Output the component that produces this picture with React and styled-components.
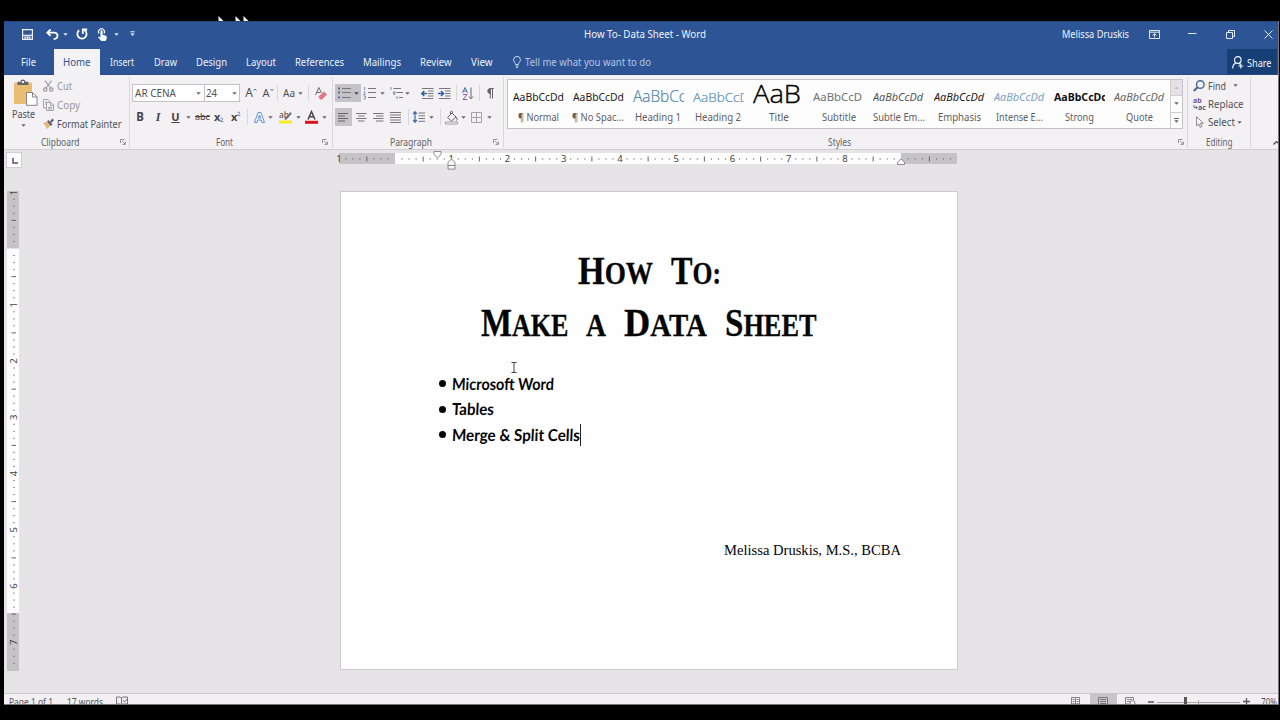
import React, { useLayoutEffect, useRef } from "react";
import styled, { createGlobalStyle, css } from "styled-components";

const Global = createGlobalStyle`
  * { box-sizing: border-box; }
  body { margin: 0; background: #000; overflow: hidden; }
  svg { display: block; overflow: visible; flex: none; }
`;

const UI = `"Noto Sans", "Open Sans", sans-serif`;

/* ---------- text fitted to a fixed advance width ---------- */
const FitBox = styled.span`
  display: block;
  flex: none;
  width: ${(p) => p.$w}px;
  height: ${(p) => p.$lh || 14}px;
  margin-left: ${(p) => p.$l || 0}px;
  white-space: nowrap;
  font: ${(p) => p.$font || `${p.$size || 11}px ${UI}`};
  line-height: ${(p) => p.$lh || 14}px;
  color: ${(p) => p.$c || "inherit"};
  ${(p) => p.$stroke && css`-webkit-text-stroke: ${p.$stroke}px currentColor;`}
`;
const FitInner = styled.span`
  display: inline-block;
  transform-origin: 0 50%;
`;
function Fit({ w, l, size, font, lh, c, stroke, slant = 0, children }) {
  const ref = useRef(null);
  useLayoutEffect(() => {
    const el = ref.current;
    el.style.transform = "none";
    const natural = el.getBoundingClientRect().width;
    if (natural) el.style.transform = `scaleX(${w / natural})${slant ? ` skewX(${-slant}deg)` : ""}`;
  }, [w, slant]);
  return (
    <FitBox $w={w} $l={l} $size={size} $font={font} $lh={lh} $c={c} $stroke={stroke}>
      <FitInner ref={ref}>{children}</FitInner>
    </FitBox>
  );
}

/* ---------- icons ---------- */
const IconBox = styled.span`
  display: block;
  flex: none;
  margin-left: ${(p) => p.$l || 0}px;
  width: ${(p) => p.$w}px;
  height: ${(p) => p.$h}px;
`;
const Icon = ({ w, h, l, c = "#666", sw = 1, children }) => (
  <IconBox $w={w} $h={h} $l={l}>
    <svg width={w} height={h} viewBox={`0 0 ${w} ${h}`} fill="none" stroke={c} strokeWidth={sw}>
      {children}
    </svg>
  </IconBox>
);
const Caret = ({ l, c = "#666" }) => (
  <Icon w={5} h={3} l={l} c="none"><path d="M0.3 0.2h4.4L2.5 2.7z" fill={c} /></Icon>
);
const Launcher = ({ l }) => (
  <Icon w={6} h={6} l={l} c="#777" sw={0.8}>
    <path d="M0.5 4V0.5H4.5M2.2 2.2L5 5M5.4 2.5V5.4H2.5" />
  </Icon>
);
const Lines = ({ rows, c = "#777" }) => (
  <>{rows.map(([x1, x2, y], i) => <path key={i} d={`M${x1} ${y}H${x2}`} stroke={c} />)}</>
);

/* ---------- frame ---------- */
const Screen = styled.div`
  width: 1280px;
  height: 720px;
  background: #000;
  overflow: hidden;
  font-family: ${UI};
`;
const TopStrip = styled.div`
  height: 21px;
  padding: 16px 0 0 218px;
  display: flex;
  overflow: hidden;
`;
const Window = styled.div`
  width: 1275px;
  height: 684px;
  margin-left: 4px;
  overflow: hidden;
  display: flex;
  flex-direction: column;
  background: #e6e4e7;
  border-right: 1px solid #77777c;
  border-bottom: 1px solid #77777c;
`;
const TitleBar = styled.div`
  height: 28px;
  flex: none;
  display: flex;
  align-items: center;
  padding-bottom: 3px;
  background: #2d5596;
  border-top: 1px solid #24477f;
  color: #eef3fb;
`;
const TabBar = styled.div`
  height: 26px;
  flex: none;
  display: flex;
  align-items: center;
  background: #2d5596;
  border-bottom: 1px solid #254b8a;
  color: #eaf0fa;
`;
const ActiveTab = styled.div`
  width: 46px;
  height: 26px;
  margin: 1px 0 0 18px;
  display: flex;
  align-items: center;
  background: #f3f2f5;
  color: #2f5696;
`;
const ShareButton = styled.div`
  width: 50px;
  height: 25px;
  margin-left: 576px;
  padding-top: 2px;
  display: flex;
  align-items: center;
  background: #163f75;
  color: #f3f6fb;
`;

/* ---------- ribbon ---------- */
const Ribbon = styled.div`
  height: 75px;
  flex: none;
  display: flex;
  background: #f3f1f4;
  border-bottom: 1px solid #d0ced1;
  color: #505054;
`;
const Group = styled.div`
  width: ${(p) => p.$w}px;
  flex: none;
  margin: 2px 0 1px;
  display: flex;
  flex-direction: column;
  border-right: 1px solid #dad8dc;
`;
const GroupBody = styled.div`
  height: 58px;
  flex: none;
  display: flex;
  flex-direction: ${(p) => (p.$col ? "column" : "row")};
`;
const GroupFooter = styled.div`
  height: 14px;
  display: flex;
  align-items: center;
  color: #626266;
`;
const Row = styled.div`
  display: flex;
  align-items: center;
  flex: none;
  height: ${(p) => p.$h}px;
  margin-top: ${(p) => p.$t || 0}px;
  color: ${(p) => p.$c || "inherit"};
`;
const PasteButton = styled.div`
  width: 35px;
  display: flex;
  flex-direction: column;
  padding: 3px 0 0 8px;
`;
const List = styled.div`
  display: flex;
  flex-direction: column;
  padding-left: ${(p) => p.$l}px;
`;
const ComboBox = styled.div`
  width: ${(p) => p.$w}px;
  height: 18px;
  flex: none;
  margin-left: ${(p) => p.$l || 0}px;
  display: flex;
  align-items: center;
  background: #fff;
  border: 1px solid #c4c2c6;
`;
const Divider = styled.span`
  width: 1px;
  height: 16px;
  flex: none;
  margin-left: ${(p) => p.$l}px;
  background: #d8d6da;
`;
const Pressed = styled.div`
  width: ${(p) => p.$w}px;
  height: 18px;
  flex: none;
  margin-left: ${(p) => p.$l}px;
  display: flex;
  align-items: center;
  background: #c5c3c7;
`;
const Gallery = styled.div`
  width: 676px;
  height: 50px;
  margin: 2px 0 0 3px;
  display: flex;
  background: #fdfdfe;
  border: 1px solid #c4c2c6;
`;
const StyleCard = styled.div`
  width: 60.15px;
  flex: none;
  display: flex;
  flex-direction: column;
  align-items: center;
`;
const Sample = styled.div`
  height: 28px;
  width: 51px;
  overflow: hidden;
  display: flex;
  align-items: flex-end;
`;
const CardLabel = styled.div`
  height: 14px;
  margin-top: 2px;
  color: #5d5d61;
`;
const GalleryScroll = styled.div`
  margin-left: auto;
  width: 12px;
  display: flex;
  flex-direction: column;
  border-left: 1px solid #d0ced2;
`;
const ScrollCell = styled.div`
  flex: 1;
  display: flex;
  align-items: center;
  justify-content: center;
  background: ${(p) => (p.$off ? "#e4e2e6" : "#fdfdfe")};
  & + & { border-top: 1px solid #d0ced2; }
`;

/* ---------- work area ---------- */
const RulerRow = styled.div`
  height: 41px;
  flex: none;
  display: flex;
  padding-top: 2px;
`;
const TabSelector = styled.div`
  width: 16px;
  height: 16px;
  margin-left: 2px;
  padding: 5px 0 0 5px;
  background: #fcfcfd;
  border: 1px solid #cfcdd0;
`;
const HRulerBox = styled.div`
  margin: 1px 0 0 317px;
`;
const Canvas = styled.div`
  flex: 1;
  display: flex;
  align-items: flex-start;
`;
const VRulerBox = styled.div`
  width: 12px;
  margin-left: 3px;
`;
const Page = styled.div`
  position: relative;
  width: 618px;
  height: 479px;
  margin: 0 0 0 321px;
  padding-top: 56px;
  background: #fefefe;
  border: 1px solid #cccacd;
  color: #050505;
`;
const Heading = styled.div`
  display: flex;
  height: ${(p) => p.$h}px;
  padding-left: ${(p) => p.$l}px;
  gap: 18px;
`;
const Small = styled.span`
  font-size: 31px;
`;
const BulletList = styled.ul`
  list-style: none;
  margin: 19px 0 0;
  padding: 0 0 0 98px;
`;
const Bullet = styled.li`
  display: flex;
  align-items: center;
  height: 25.6px;
`;
const Dot = styled.span`
  width: 7px;
  height: 7px;
  margin-right: 6px;
  border-radius: 50%;
  background: #050505;
`;
const TextCaret = styled.span`
  width: 1px;
  height: 22px;
  background: #222;
`;
const Author = styled.div`
  margin: 93px 0 0 383px;
`;
const Pointer = styled.div`
  position: absolute;
  left: 170px;
  top: 170px;
`;
const StatusBar = styled.div`
  height: 11px;
  flex: none;
  display: flex;
  overflow: hidden;
  background: #f2f0f3;
  border-top: 1px solid #c9c7ca;
  color: #58585c;
`;
const StatusItem = styled.div`
  flex: none;
  padding-top: ${(p) => p.$t || 0}px;
  margin-left: ${(p) => p.$l}px;
  height: 16px;
`;
const ViewActive = styled.div`
  width: 27px;
  height: 10px;
  margin-left: 10px;
  padding: 3px 0 0 8px;
  background: #c7c5c8;
`;

const U = 56.25;
function HRuler() {
  const marks = [];
  for (let i = -7; i <= 79; i++) {
    const x = 56 + (i * U) / 8;
    if (x > 614) break;
    if (i % 8 === 0) {
      if (i > 0 && i < 72) marks.push(<text key={i} x={x} y={9.4} textAnchor="middle" fontSize="9.5" fontFamily={UI} fill="#444">{i / 8}</text>);
    } else if (i % 4 === 0) marks.push(<path key={i} d={`M${x} 3.5v5`} stroke="#666" />);
    else marks.push(<path key={i} d={`M${x} 5.3v1.4`} stroke="#777" />);
  }
  return (
    <svg width="618" height="12">
      <rect width="618" height="11" fill="#fdfdfe" />
      <rect width="56" height="11" fill="#c5c3c5" />
      <rect x="562" width="56" height="11" fill="#c5c3c5" />
      {marks}
      <text x="0" y="9.4" textAnchor="middle" fontSize="9.5" fontFamily={UI} fill="#444">1</text>
      <g fill="#fafafa" stroke="#808084" strokeWidth="0.9">
        <path d="M95 -1.5h7v3l-3.5 3.3L95 1.5z" />
        <path d="M109 12.5V9.3L112.5 6l3.5 3.3V12.5zM109 12.5h7v3.6h-7z" />
        <path d="M558.5 11.5V9.2L562 6l3.5 3.2v2.3z" />
      </g>
    </svg>
  );
}
function VRuler() {
  const marks = [];
  for (let i = -7; i <= 59; i++) {
    const y = 57.5 + (i * U) / 8;
    if (y > 476) break;
    if (i % 8 === 0) {
      if (i) marks.push(<text key={i} transform={`translate(10 ${y}) rotate(-90)`} textAnchor="middle" fontSize="9.5" fontFamily={UI} fill="#444">{i / 8}</text>);
    } else if (i % 4 === 0) marks.push(<path key={i} d={`M4.5 ${y}h4.5`} stroke="#666" />);
    else marks.push(<path key={i} d={`M6.2 ${y}h1.5`} stroke="#777" />);
  }
  return (
    <svg width="12" height="480">
      <rect width="12" height="480" fill="#fdfdfe" />
      <rect width="12" height="57.5" fill="#c5c3c5" />
      <rect y="422" width="12" height="58" fill="#c5c3c5" />
      {marks}
      <text transform="translate(10 1.5) rotate(-90)" textAnchor="middle" fontSize="9.5" fontFamily={UI} fill="#444">1</text>
    </svg>
  );
}

const it = (s = 11) => `italic ${s}px ${UI}`;
const light = (s) => `300 ${s}px "Open Sans", ${UI}`;
const cards = [
  { s: "AaBbCcDd", w: 51, c: "#1b1b1b", n: "¶ Normal", nw: 41 },
  { s: "AaBbCcDd", w: 51, c: "#1b1b1b", n: "¶ No Spac...", nw: 52 },
  { s: "AaBbCcD", w: 64, c: "#4f86ad", n: "Heading 1", nw: 46, font: light(15.5), lh: 23, stroke: 0.2 },
  { s: "AaBbCcD", w: 56, c: "#5c8db0", n: "Heading 2", nw: 46, font: light(13), lh: 22, stroke: 0.2 },
  { s: "AaB", w: 48, c: "#000", n: "Title", nw: 20, font: light(26), lh: 30, stroke: 0.4 },
  { s: "AaBbCcD", w: 49, c: "#707074", n: "Subtitle", nw: 34 },
  { s: "AaBbCcDd", w: 50, c: "#555", n: "Subtle Em...", nw: 52, font: it() },
  { s: "AaBbCcDd", w: 50, c: "#1b1b1b", n: "Emphasis", nw: 43, font: it() },
  { s: "AaBbCcDd", w: 50, c: "#79a3c8", n: "Intense E...", nw: 47, font: it() },
  { s: "AaBbCcDd", w: 54, c: "#111", n: "Strong", nw: 29, font: `bold 11px ${UI}` },
  { s: "AaBbCcDd", w: 50, c: "#666", n: "Quote", nw: 27, font: it() },
];

const serif = (s) => `bold ${s}px "Liberation Serif", serif`;
const Word = ({ w, cap, rest }) => (
  <Fit w={w} font={serif(39)} lh={46} stroke={0.3}>{cap}<Small>{rest}</Small></Fit>
);
const Casual = ({ w, children }) => (
  <Fit w={w} font={`700 16.5px Lato, sans-serif`} lh={20} slant={3}>{children}</Fit>
);

const Glyph = styled.span`
  display: block;
  flex: none;
  width: ${(p) => p.$w}px;
  margin-left: ${(p) => p.$l}px;
  text-align: center;
  white-space: nowrap;
  font: ${(p) => p.$font};
  line-height: 16px;
  ${(p) => p.$u && css`text-decoration: ${p.$u};`}
`;

export default function App() {
  return (
    <Screen>
      <Global />
      <TopStrip>
        {[0, 12, 3].map((l, i) => (
          <Icon key={i} w={5} h={6} l={l} c="none"><path d="M0.5 0L5.5 5H0.5z" fill="#f4f4f4" /></Icon>
        ))}
      </TopStrip>
      <Window>
        <TitleBar>
          <Icon w={11} h={11} l={18} c="#eef3fb" sw={1.2}>
            <path d="M0.6 0.6h9.8v9.8H0.6z" /><path d="M1 6.3h9" /><path d="M3 10.4V8h5v2.4M5.5 8.5v2" />
          </Icon>
          <Icon w={13} h={11} l={13} c="#fff" sw={1.8}>
            <path d="M4.6 0.5L1.3 3.7l3.3 3.2M1.8 3.7h6.4c4.5 0 4.5 6-0.5 6.3" />
          </Icon>
          <Caret l={4} c="#dfe8f6" />
          <Icon w={12} h={12} l={8} c="#fff" sw={1.8}>
            <path d="M3.2 2.3A4.6 4.6 0 1 0 8.6 2.2M6.8 6V1.5h4.4" />
          </Icon>
          <Icon w={11} h={13} l={9} c="#f3f6fc" sw={1.2}>
            <path d="M2 5.5a3 3 0 1 1 5 0" /><path d="M3.4 3.5c0-1.7 2.3-1.7 2.3 0v3.3l4 1.2v3l-1.3 2H4.2L1 9.2l1-.8 1.4 1z" fill="#f3f6fc" stroke="none" />
          </Icon>
          <Caret l={6} c="#dfe8f6" />
          <Icon w={5} h={6} l={11} c="#e8eef8"><path d="M0.3 0.8h4.4" /><path d="M0.3 2.6h4.4L2.5 5z" fill="#e8eef8" stroke="none" /></Icon>
          <Fit l={449} w={122}>How To- Data Sheet - Word</Fit>
          <Fit l={356} w={67}>Melissa Druskis</Fit>
          <Icon w={11} h={9} l={20} c="#dfe8f6"><path d="M0.5 0.5h10v8h-10zM0.5 2.2h10M5.5 7.5V3.8M3.5 5.5l2-2 2 2" /></Icon>
          <Icon w={9} h={2} l={28} c="#dfe8f6"><path d="M0 0.5h8.5" /></Icon>
          <Icon w={9} h={9} l={29} c="#dfe8f6"><path d="M0.5 2.5h6v6h-6zM2.5 2.5v-2h6v6h-2" /></Icon>
          <Icon w={9} h={9} l={29} c="#dfe8f6"><path d="M0.5 0.5l8 8M8.5 0.5l-8 8" /></Icon>
        </TitleBar>
        <TabBar>
          <Fit l={17} w={15}>File</Fit>
          <ActiveTab><Fit l={9} w={27.5}>Home</Fit></ActiveTab>
          <Fit l={10} w={24}>Insert</Fit>
          <Fit l={20} w={23}>Draw</Fit>
          <Fit l={19} w={31}>Design</Fit>
          <Fit l={19} w={30}>Layout</Fit>
          <Fit l={19} w={49}>References</Fit>
          <Fit l={19} w={38}>Mailings</Fit>
          <Fit l={19} w={31.5}>Review</Fit>
          <Fit l={19} w={21.5}>View</Fit>
          <Icon w={8} h={12} l={20.5} c="#c5d3ec"><path d="M2.5 8.5C2.5 6.5 0.6 6 0.6 3.8a3.4 3.4 0 0 1 6.8 0C7.4 6 5.5 6.5 5.5 8.5zM2.5 10h3M3 11.5h2" /></Icon>
          <Fit l={4.5} w={126} c="#b4c5e4">Tell me what you want to do</Fit>
          <ShareButton>
            <Icon w={12} h={13} l={4.5} c="#eef3fb" sw={1.2}><circle cx="5.8" cy="4" r="3.3" /><path d="M0.7 12.5c0-3 1.5-4.8 3.5-5.3M6.8 7.5l1.2 0.8M8.8 7.5v5M6.3 10h5" /></Icon>
            <Fit l={3} w={24.5}>Share</Fit>
          </ShareButton>
        </TabBar>

        <Ribbon>
          <Group $w={126}>
            <GroupBody>
              <PasteButton>
                <Icon w={25} h={27} l={1} c="none">
                  <rect x="1" y="2.5" width="18" height="21.5" rx="1" fill="#e9bd72" />
                  <path d="M4.5 5V1.8h3a2.4 2.4 0 0 1 4.8 0h3V5z" fill="#64646a" /><rect x="8.8" y="1" width="2.2" height="2" fill="#f3f1f4" />
                  <path d="M13.5 12.5h6l4.5 4.5v8.3H13.5z" fill="#fff" stroke="#85858a" /><path d="M19.5 12.5V17h4.5" stroke="#85858a" />
                </Icon>
                <Fit w={23} lh={14}>Paste</Fit>
                <Row $h={9}><Caret l={9} /></Row>
              </PasteButton>
              <List $l={4}>
                <Row $h={18} $c="#99979b">
                  <Icon w={11} h={12} c="#9b999d" sw={1.2}><path d="M2 0.5l5.5 7.5M8.5 0.5L3 8" /><circle cx="2.3" cy="9.5" r="1.7" /><circle cx="8.3" cy="9.5" r="1.7" /></Icon>
                  <Fit l={3} w={15}>Cut</Fit>
                </Row>
                <Row $h={19} $c="#99979b">
                  <Icon w={11} h={12} c="#a6a4a8"><path d="M0.5 0.5h4.5l1.5 1.5v1M0.5 0.5v8.5h3M3.5 3.5h4.5l2.5 2.5v5.5h-7zM7.5 3.5v3h3M2 3h1.5M2 5h1M5 8.5h4M5 10h4" /></Icon>
                  <Fit l={3} w={23}>Copy</Fit>
                </Row>
                <Row $h={19}>
                  <Icon w={11} h={11} c="none"><path d="M0 5l4-1 3 4-3 3C3 8 1.5 7 0 5z" fill="#e5b676" /><path d="M4 3.5L5.5 2l4 4.5L7.5 8z" fill="#606066" /><path d="M7 3.2L9.5 0.5l1.5 1.7-2.7 2.7z" fill="#606066" /></Icon>
                  <Fit l={3} w={64.5}>Format Painter</Fit>
                </Row>
              </List>
            </GroupBody>
            <GroupFooter><Fit l={37} w={38.5} size={10}>Clipboard</Fit><Launcher l={40.5} /></GroupFooter>
          </Group>

          <Group $w={203}>
            <GroupBody $col>
              <Row $h={18} $t={7}>
                <ComboBox $w={73} $l={2}><Fit l={1.5} w={41}>AR CENA</Fit><Caret l={20.5} /></ComboBox>
                <ComboBox $w={36} $l={-1}><Fit l={1} w={11}>24</Fit><Caret l={15} /></ComboBox>
                <Glyph $w={8} $l={5} $font={`12px ${UI}`}>A</Glyph>
                <Icon w={4} h={10} c="#4b6fa5"><path d="M0.5 2.5L2 1l1.5 1.5" /></Icon>
                <Glyph $w={8} $l={5} $font={`11px ${UI}`}>A</Glyph>
                <Icon w={4} h={10} c="#4b6fa5"><path d="M0.5 1L2 2.5 3.5 1" /></Icon>
                <Divider $l={3} />
                <Fit l={5} w={12}>Aa</Fit><Caret l={3} />
                <Divider $l={5} />
                <Icon w={12} h={13} l={6} c="none"><path d="M0.5 8L3.8 0.5 6.5 6M1.8 5.5h3.5" stroke="#66666a" /><path d="M3.5 9.5L9 4.5l3 3-5 5H5z" fill="#e0768c" /></Icon>
              </Row>
              <Row $h={18} $t={6} $c="#444448">
                <Glyph $w={8} $l={6} $font={`bold 11.5px ${UI}`}>B</Glyph>
                <Glyph $w={8} $l={10} $font={`italic bold 12px "Liberation Serif", serif`}>I</Glyph>
                <Glyph $w={9} $l={9} $font={`bold 11px ${UI}`} $u="underline">U</Glyph>
                <Caret l={6} />
                <Glyph $w={14} $l={4} $font={`9px ${UI}`} $u="line-through">abc</Glyph>
                <Glyph $w={6} $l={5} $font={`bold 11px ${UI}`}>x</Glyph>
                <Icon w={4} h={10} c="#4b6fa5" sw={0.8}><path d="M0.5 6.5c1-1 2.5-0.5 2 0.8L0.5 9.5h3" /></Icon>
                <Glyph $w={6} $l={7} $font={`bold 11px ${UI}`}>x</Glyph>
                <Icon w={4} h={10} c="#4b6fa5" sw={0.8}><path d="M0.5 0.5c1-1 2.5-0.5 2 0.8L0.5 3.5h3" /></Icon>
                <Divider $l={6} />
                <Icon w={11} h={11} l={6} c="#5a8ac6" sw={0.9}><path d="M0.5 10.5L4 0.5h3l3.5 10H8L7.2 8H3.8L3 10.5zM4.5 6h2L5.5 3z" fill="#e9f1fb" /></Icon>
                <Caret l={3} />
                <Icon w={14} h={13} l={6} c="none">
                  <rect y="9.5" width="13" height="3" fill="#f7ef20" />
                  <text x="0" y="7" fontSize="8.5" fontFamily={UI} fill="#444">ab</text>
                  <path d="M12.8 2.5L7.5 8.5 5.5 9l.5-2L11.5 1z" fill="#6d6d72" />
                </Icon>
                <Caret l={3} />
                <Icon w={13} h={13} l={4} c="none">
                  <rect y="9.8" width="13" height="3" fill="#d8131c" />
                  <path d="M3 8.5L6.5 0.5 10 8.5M4.2 5.8h4.6" stroke="#44444a" strokeWidth="1.5" />
                </Icon>
                <Caret l={4} />
              </Row>
            </GroupBody>
            <GroupFooter><Fit l={86} w={17} size={10}>Font</Fit><Launcher l={89} /></GroupFooter>
          </Group>

          <Group $w={171}>
            <GroupBody $col>
              <Row $h={18} $t={7}>
                <Pressed $w={26} $l={2}>
                  <Icon w={14} h={12} l={2}><Lines rows={[[5, 14, 1.5], [5, 14, 5.5], [5, 14, 10.5]]} /><path d="M1 1.5h2M1 5.5h2M1 10.5h2" stroke="#4f6f9f" strokeWidth="2" /></Icon>
                  <Caret l={3} c="#444" />
                </Pressed>
                <Icon w={13} h={12} l={2}><Lines rows={[[5, 13, 1.5], [5, 13, 5.5], [5, 13, 10.5]]} /><path d="M1.5 0v3M0.5 4.8h1.5v1.3l-1.5 1.5h2M0.5 9h1.8v3h-1.8" stroke="#5d7cab" strokeWidth="0.8" /></Icon>
                <Caret l={4} />
                <Icon w={13} h={12} l={5}><Lines rows={[[3.5, 11, 1.5], [6.5, 13, 5.5], [9, 13, 10.5]]} /><path d="M1 0v3M3.5 4.8h1.5v2.5h-1.5zM7 9v3" stroke="#5d7cab" strokeWidth="0.8" /></Icon>
                <Caret l={2} />
                <Icon w={13} h={11} l={11}><Lines rows={[[1, 12.5, 0.5], [7, 12.5, 3], [7, 12.5, 5.5], [7, 12.5, 8], [1, 12.5, 10.5]]} /><path d="M6 5.5H1M3.3 3L0.8 5.5 3.3 8" stroke="#2f5f9f" strokeWidth="1.5" /></Icon>
                <Icon w={13} h={11} l={4}><Lines rows={[[1, 12.5, 0.5], [7, 12.5, 3], [7, 12.5, 5.5], [7, 12.5, 8], [1, 12.5, 10.5]]} /><path d="M0 5.5h5M3 3l2.5 2.5L3 8" stroke="#2f5f9f" strokeWidth="1.5" /></Icon>
                <Divider $l={5} />
                <Icon w={12} h={13} l={5}><path d="M0.5 6L3 0.5 5.5 6M1.5 4h3" stroke="#4670a8" /><path d="M1 7.5h4L1 12.5h4.3" stroke="#8d5c9c" /><path d="M9 0.5v11M6.8 9.5L9 11.8l2.2-2.3" /></Icon>
                <Divider $l={5} />
                <Icon w={8} h={11} l={6}><path d="M4 0.5h3.8M4.3 0.5v10M6.5 0.5v10" /><path d="M4.3 5.5a2.5 2.5 0 0 1 0-5z" fill="#666" /></Icon>
              </Row>
              <Row $h={18} $t={6}>
                <Pressed $w={17} $l={2}><Icon w={11} h={9} l={3}><Lines c="#626266" rows={[[0, 10, 0.5], [0, 7, 3], [0, 10, 5.5], [0, 7, 8]]} /></Icon></Pressed>
                <Icon w={11} h={9} l={4}><Lines rows={[[0, 10.5, 0.5], [2, 8.5, 3], [0, 10.5, 5.5], [2, 8.5, 8]]} /></Icon>
                <Icon w={11} h={9} l={6}><Lines rows={[[0, 10.5, 0.5], [3, 10.5, 3], [0, 10.5, 5.5], [3, 10.5, 8]]} /></Icon>
                <Icon w={11} h={11} l={6}><Lines rows={[[0, 11, 0.5], [0, 11, 3], [0, 11, 5.5], [0, 11, 8], [0, 11, 10.5]]} /></Icon>
                <Divider $l={7} />
                <Icon w={12} h={12} l={4}><Lines rows={[[5.5, 12, 2], [5.5, 12, 4.8], [5.5, 12, 7.5], [5.5, 12, 10.3]]} /><path d="M2 1v10M0.2 3L2 0.8 3.8 3M0.2 9L2 11.2 3.8 9" stroke="#3f6ba6" strokeWidth="1.2" /></Icon>
                <Caret l={3.5} />
                <Divider $l={6.5} />
                <Icon w={13} h={13} l={4}><path d="M2.5 6.5L7 2l4 4-4.5 4zM5.5 3.5V1c0-1 2-1 2 0v2M11 6c2 1.5 1 3 0.5 3.5" /><path d="M0.5 11h12v2h-12z" stroke="#9a989c" fill="#fff" /></Icon>
                <Caret l={3} />
                <Icon w={11} h={11} l={5} c="#a5a3a7"><path d="M0.5 0.5h10v10h-10zM5.5 0.5v10M0.5 5.5h10" /></Icon>
                <Caret l={5} />
              </Row>
            </GroupBody>
            <GroupFooter><Fit l={57} w={42} size={10}>Paragraph</Fit><Launcher l={61} /></GroupFooter>
          </Group>

          <Group $w={684}>
            <GroupBody>
              <Gallery>
                {cards.map((k) => (
                  <StyleCard key={k.n}>
                    <Sample>
                      <Fit w={k.w} c={k.c} font={k.font || `11px ${UI}`} lh={k.lh || 22} stroke={k.stroke}>{k.s}</Fit>
                    </Sample>
                    <CardLabel><Fit w={k.nw} size={10.5}>{k.n}</Fit></CardLabel>
                  </StyleCard>
                ))}
                <GalleryScroll>
                  <ScrollCell $off><Icon w={5} h={3} c="none"><path d="M0.5 3L2.5 0.5 4.5 3z" fill="#bbb" /></Icon></ScrollCell>
                  <ScrollCell><Caret /></ScrollCell>
                  <ScrollCell><Icon w={5} h={5} c="#666"><path d="M0 0.5h5" /><path d="M0.3 2.3h4.4L2.5 4.7z" fill="#666" stroke="none" /></Icon></ScrollCell>
                </GalleryScroll>
              </Gallery>
            </GroupBody>
            <GroupFooter><Fit l={323.5} w={23} size={10}>Styles</Fit><Launcher l={327} /></GroupFooter>
          </Group>

          <Group $w={63}>
            <GroupBody $col>
              <Row $h={17}>
                <Icon w={12} h={12} l={5} c="#44699f" sw={1.4}><circle cx="7.3" cy="4.5" r="3.8" /><path d="M4.5 7.3L0.8 11" strokeWidth="2" /></Icon>
                <Fit l={3} w={18}>Find</Fit><Caret l={7} />
              </Row>
              <Row $h={19}>
                <Icon w={13} h={12} l={5} c="none">
                  <text x="0" y="5" fontSize="7" fontWeight="bold" fontFamily={UI} fill="#77578d">ab</text>
                  <text x="5" y="12" fontSize="7" fontWeight="bold" fontFamily={UI} fill="#55637f">ac</text>
                  <path d="M1 7v2.5h3M2.8 8l1.5 1.5L2.8 11" stroke="#44699f" strokeWidth="0.9" />
                </Icon>
                <Fit l={2} w={35.5}>Replace</Fit>
              </Row>
              <Row $h={18}>
                <Icon w={8} h={12} l={8} c="#77777c" sw={0.9}><path d="M0.6 0.8v9l2.2-2 1.5 3.5 1.6-.7-1.5-3.3h2.9z" fill="#fff" /></Icon>
                <Fit l={4} w={27}>Select</Fit><Caret l={2} />
              </Row>
            </GroupBody>
            <GroupFooter><Fit l={18} w={26.5} size={10}>Editing</Fit></GroupFooter>
          </Group>
          <Row $h={13} $t={61}><Icon w={7} h={4} l={22} c="#444" sw={1.2}><path d="M0.5 3.5l3-3 3 3" /></Icon></Row>
        </Ribbon>

        <RulerRow>
          <TabSelector><svg width="6" height="6"><path d="M1 0v5h5" fill="none" stroke="#555" strokeWidth="1.5" /></svg></TabSelector>
          <HRulerBox><HRuler /></HRulerBox>
        </RulerRow>
        <Canvas>
          <VRulerBox><VRuler /></VRulerBox>
          <Page>
            <Heading $l={236.5} $h={52}>
              <Word w={75} cap="H" rest="OW" />
              <Word w={50} cap="T" rest="O:" />
            </Heading>
            <Heading $l={139.5} $h={52}>
              <Word w={87.5} cap="M" rest="AKE" />
              <Word w={20} cap="" rest="A" />
              <Word w={83} cap="D" rest="ATA" />
              <Word w={91.5} cap="S" rest="HEET" />
            </Heading>
            <BulletList>
              <Bullet><Dot /><Casual w={102}>Microsoft Word</Casual></Bullet>
              <Bullet><Dot /><Casual w={42}>Tables</Casual></Bullet>
              <Bullet><Dot /><Casual w={128}>Merge &amp; Split Cells</Casual><TextCaret /></Bullet>
            </BulletList>
            <Author><Fit w={177} font={`15px "Liberation Serif", serif`} lh={18}>Melissa Druskis, M.S., BCBA</Fit></Author>
            <Pointer><svg width="6" height="11" fill="none" stroke="#444"><path d="M0.5 0.5h5M3 0.5v10M0.5 10.5h5" /></svg></Pointer>
          </Page>
        </Canvas>
        <StatusBar>
          <StatusItem $l={5}><Fit w={44} size={10} lh={16}>Page 1 of 1</Fit></StatusItem>
          <StatusItem $l={13.5}><Fit w={36} size={10} lh={16}>17 words</Fit></StatusItem>
          <StatusItem $l={13} $t={2}><Icon w={12} h={10} c="#77777c"><path d="M0.5 1h3.5l1.5 1 1.5-1h4.5v7H7L5.5 9 4 8H0.5zM5.5 2v7M7 4l1.5 2L12 2" /></Icon></StatusItem>
          <StatusItem $l={943.5} $t={3}><Icon w={9} h={8} c="#858589"><path d="M0.5 0.5h8v8h-8zM4.5 0v8M1.5 2.5h2M5.5 2.5h2M1.5 4.5h2M5.5 4.5h2M1.5 6.5h2M5.5 6.5h2" /></Icon></StatusItem>
          <ViewActive><Icon w={10} h={8} c="#77777b"><path d="M0.5 0.5h9v8h-9zM2 2.5h6M2 4.5h6M2 6.5h6" /></Icon></ViewActive>
          <StatusItem $l={8} $t={3}><Icon w={10} h={8} c="#858589"><path d="M8.5 3V0.5h-8v6.5h4M2 2.5h5M2 4.5h3" /><circle cx="7.5" cy="6" r="2.5" /></Icon></StatusItem>
          <StatusItem $l={12.5} $t={7}><Icon w={6} h={2} c="#555" sw={1.5}><path d="M0 1h6" /></Icon></StatusItem>
          <StatusItem $l={3.5} $t={3}><Icon w={83} h={8} c="#aaa8ac"><path d="M0 5.5h83M41.5 3v5" /><path d="M28.5 0v8" stroke="#555" strokeWidth="3" /></Icon></StatusItem>
          <StatusItem $l={3} $t={4}><Icon w={7} h={7} c="#555" sw={1.3}><path d="M0 3.5h7M3.5 0v7" /></Icon></StatusItem>
          <StatusItem $l={11}><Fit w={16} size={10} lh={16}>70%</Fit></StatusItem>
        </StatusBar>
      </Window>
    </Screen>
  );
}
